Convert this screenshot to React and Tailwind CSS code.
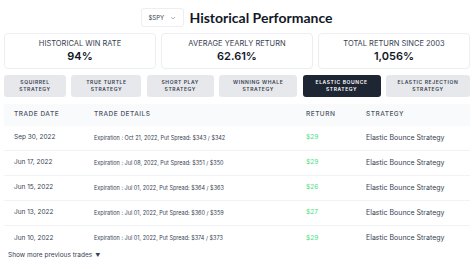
import React from "react";

const stats = [
  { label: "Historical Win Rate", value: "94%" },
  { label: "Average Yearly Return", value: "62.61%" },
  { label: "Total Return Since 2003", value: "1,056%" },
];

const strategies = [
  { name: "Squirrel", w: "w-[62px]" },
  { name: "True Turtle", w: "w-[70px]" },
  { name: "Short Play", w: "w-[67px]" },
  { name: "Winning Whale", w: "w-[78px]" },
  { name: "Elastic Bounce", w: "w-[78px]", active: true },
  { name: "Elastic Rejection", w: "w-[84px]" },
];

const trades = [
  { date: "Sep 30, 2022", details: "Expiration : Oct 21, 2022, Put Spread: $343 / $342", ret: "$29" },
  { date: "Jun 17, 2022", details: "Expiration : Jul 08, 2022, Put Spread: $351 / $350", ret: "$29" },
  { date: "Jun 15, 2022", details: "Expiration : Jul 01, 2022, Put Spread: $364 / $363", ret: "$26" },
  { date: "Jun 13, 2022", details: "Expiration : Jul 01, 2022, Put Spread: $360 / $359", ret: "$27" },
  { date: "Jun 10, 2022", details: "Expiration : Jul 01, 2022, Put Spread: $374 / $373", ret: "$29" },
];

export default function App() {
  return (
    <div
      className="w-[474px] h-[269px] bg-white overflow-hidden px-[4px] text-[#1f2937]"
      style={{ fontFamily: "Inter, 'Noto Sans', sans-serif" }}
    >
      {/* header */}
      <div className="flex items-center justify-center gap-[5px] pt-[6px] h-[29px]">
        <div className="flex items-center gap-[6px] h-[19px] w-[43px] pl-[6px] border border-[#eceef1] rounded-[3px] text-[6px] text-[#374151]">
          <span>$SPY</span>
          <svg width="6" height="4" viewBox="0 0 6 4" className="text-[#9ca3af]">
            <path d="M1 1l2 2 2-2" fill="none" stroke="currentColor" strokeWidth="0.8" />
          </svg>
        </div>
        <h1
          className="text-[14px] font-bold text-[#111827]"
          style={{ fontFamily: "Lato, sans-serif" }}
        >
          Historical Performance
        </h1>
      </div>

      {/* stats */}
      <div className="flex gap-[5px] mt-[4px]">
        {stats.map((s) => (
          <div
            key={s.label}
            className="flex-1 h-[36px] border border-[#eceef1] rounded-[4px] flex flex-col items-center justify-center"
          >
            <div className="text-[7.5px] uppercase text-[#374151] leading-none">{s.label}</div>
            <div className="text-[11px] font-semibold text-[#111827] leading-none mt-[4px]">{s.value}</div>
          </div>
        ))}
      </div>

      {/* strategy buttons */}
      <div className="flex justify-between mt-[6px]">
        {strategies.map((s) => (
          <div
            key={s.name}
            className={`${s.w} h-[22px] rounded-[3px] flex flex-col items-center justify-center text-[5px] font-semibold uppercase tracking-[0.6px] leading-[7px] ${
              s.active ? "bg-[#1e2533] text-white" : "bg-[#e7e8eb] text-[#374151]"
            }`}
          >
            <span>{s.name}</span>
            <span>Strategy</span>
          </div>
        ))}
      </div>

      {/* table */}
      <div className="mt-[7px] text-[6.5px]">
        <div className="flex items-center h-[22px] bg-[#f9fafb] text-[#4b5563] uppercase tracking-[0.5px] font-medium">
          <div className="w-[90px] pl-[10px]">Trade Date</div>
          <div className="w-[212px]">Trade Details</div>
          <div className="w-[60px]">Return</div>
          <div className="flex-1">Strategy</div>
        </div>
        {trades.map((t, i) => (
          <div
            key={t.date}
            className={`flex items-center h-[25px] text-[#374151] ${i < trades.length - 1 ? "border-b border-[#f1f2f4]" : ""}`}
          >
            <div className="w-[90px] pl-[10px]">{t.date}</div>
            <div className="w-[212px] text-[5.5px]">{t.details}</div>
            <div className="w-[60px] text-[#4ade80]">{t.ret}</div>
            <div className="flex-1 text-[7px]">Elastic Bounce Strategy</div>
          </div>
        ))}
        <div className="flex items-center gap-[3px] pl-[4px] text-[6.5px] text-[#374151]">
          <span>Show more previous trades</span>
          <span className="text-[5px]">▼</span>
        </div>
      </div>
    </div>
  );
}
